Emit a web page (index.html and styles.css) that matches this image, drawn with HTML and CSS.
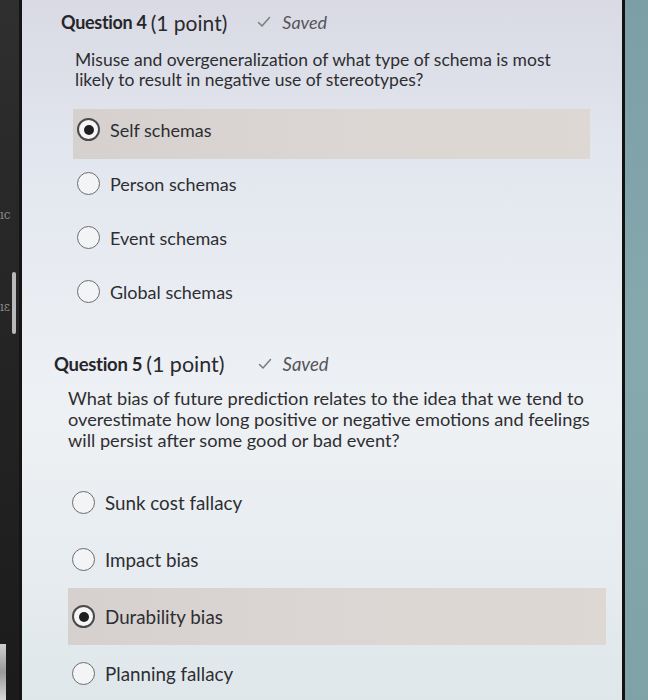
FILE: index.html
```html
<!DOCTYPE html>
<html lang="en">
<head>
<meta charset="utf-8">
<title>Quiz</title>
<link rel="stylesheet" href="styles.css">
</head>
<body>
<div class="screen">
  <aside class="bezel-left">
    <div class="edge-col">
      <span class="edge-txt t1">ıc</span>
      <span class="edge-txt t2">ıɛ</span>
      <span class="edge-patch"></span>
    </div>
    <div class="scroll-col"><span class="thumb"></span></div>
  </aside>
  <main class="page">
    <section class="q q4">
      <div class="qhead">
        <span class="qlabel">Question 4</span>
        <span class="pts">(1 point)</span>
        <span class="saved"><svg class="check" viewBox="0 0 14 12" width="14" height="12"><path d="M1.5 6.5 L5 10 L12.5 1.5" fill="none" stroke="#7b7b80" stroke-width="1.5" stroke-linecap="round" stroke-linejoin="round"/></svg>Saved</span>
      </div>
      <p class="qtext qtext4">Misuse and overgeneralization of what type of schema is most likely to result in negative use of stereotypes?</p>
      <div class="opts">
        <div class="opt opt4 sel"><span class="radio on"></span><span class="label">Self schemas</span></div>
        <div class="opt opt4"><span class="radio"></span><span class="label">Person schemas</span></div>
        <div class="opt opt4"><span class="radio"></span><span class="label">Event schemas</span></div>
        <div class="opt opt4"><span class="radio"></span><span class="label">Global schemas</span></div>
      </div>
    </section>
    <section class="q q5">
      <div class="qhead">
        <span class="qlabel">Question 5</span>
        <span class="pts">(1 point)</span>
        <span class="saved"><svg class="check" viewBox="0 0 14 12" width="14" height="12"><path d="M1.5 6.5 L5 10 L12.5 1.5" fill="none" stroke="#7b7b80" stroke-width="1.5" stroke-linecap="round" stroke-linejoin="round"/></svg>Saved</span>
      </div>
      <p class="qtext qtext5">What bias of future prediction relates to the idea that we tend to overestimate how long positive or negative emotions and feelings will persist after some good or bad event?</p>
      <div class="opts opts5">
        <div class="opt opt5"><span class="radio"></span><span class="label">Sunk cost fallacy</span></div>
        <div class="opt opt5"><span class="radio"></span><span class="label">Impact bias</span></div>
        <div class="opt opt5 sel"><span class="radio on"></span><span class="label">Durability bias</span></div>
        <div class="opt opt5"><span class="radio"></span><span class="label">Planning fallacy</span></div>
      </div>
    </section>
  </main>
  <div class="bezel-right"></div>
</div>
</body>
</html>
```

FILE: styles.css
```css
html, body {
  margin: 0;
  padding: 0;
  background: #1e1e1e;
}

.screen {
  display: flex;
  width: 648px;
  height: 700px;
  overflow: hidden;
}

.bezel-left {
  width: 22px;
  flex: none;
  display: flex;
  background: linear-gradient(180deg, #2f2f2f 0%, #262626 40%, #1b1b1b 100%);
  border-right: 3px solid #151515;
  box-sizing: border-box;
}

.edge-col {
  width: 12px;
  display: flex;
  flex-direction: column;
  overflow: hidden;
}

.edge-txt {
  font-family: "DejaVu Serif", serif;
  font-size: 12px;
  line-height: 14px;
  color: #8a8a8a;
  white-space: nowrap;
}

.t1 { margin-top: 208px; }
.t2 { margin-top: 78px; }

.edge-patch {
  margin-top: 330px;
  width: 6px;
  height: 56px;
  background: linear-gradient(180deg, #cfcfcf, #9a9a9a 50%, #d8d8d8);
}

.scroll-col {
  width: 5px;
}

.thumb {
  display: block;
  margin-top: 272px;
  width: 4px;
  height: 62px;
  border-radius: 2px;
  background: #b9b9bb;
}

.page {
  flex: 1;
  background: linear-gradient(180deg, #d9dae4 0%, #e2e6ee 22%, #eaeef3 45%, #eef1f4 60%, #e5ebef 85%, #dfe7eb 100%);
  font-family: Lato, "Open Sans", sans-serif;
  color: #2f2f33;
  overflow: hidden;
}

.q4 { margin-left: 51px; }
.q5 { margin-left: 46px; }

.qhead {
  display: flex;
  align-items: center;
  height: 24px;
  white-space: nowrap;
}

.q4 .qhead { margin-top: 10px; margin-left: -12px; }
.q5 .qhead { margin-top: 31px; margin-left: -14px; }

.qlabel {
  font-size: 18px;
  font-weight: 700;
  letter-spacing: -0.3px;
  color: #26262a;
}

.pts {
  font-size: 21px;
  margin-left: 4px;
  color: #2a2a2e;
}

.saved {
  display: flex;
  align-items: center;
  gap: 11px;
  margin-left: 30px;
  font-size: 18px;
  font-style: italic;
  color: #55555b;
}

.q5 .qlabel { font-size: 18.5px; }
.q5 .pts { font-size: 21.5px; }
.q5 .saved { margin-left: 33px; font-size: 18.5px; }

.check { display: block; }

.qtext {
  margin: 0;
  color: #2e2e32;
}

.qtext4 {
  margin-top: 16px;
  margin-left: 2px;
  font-size: 17.5px;
  line-height: 20px;
  width: 495px;
}

.qtext5 {
  margin-top: 12px;
  font-size: 18.2px;
  line-height: 21px;
  width: 535px;
}

.opts { margin-top: 19px; }
.opts5 { margin-top: 23px; }

.opt {
  display: flex;
  align-items: center;
  gap: 10px;
  box-sizing: border-box;
  padding-left: 4px;
  color: #2e2e32;
}

.opt4 {
  width: 517px;
  height: 50px;
  margin-bottom: 4px;
  padding-bottom: 9px;
  font-size: 18px;
}

.opt4:last-child { margin-bottom: 0; }

.opt5 {
  width: 538px;
  height: 57px;
  font-size: 18.8px;
}

.sel {
  background: linear-gradient(90deg, #d6d1cf 0%, #dbd6d3 50%, #ddd8d3 100%);
}

.radio {
  flex: none;
  width: 23px;
  height: 23px;
  box-sizing: border-box;
  border: 1.5px solid #6c6c70;
  border-radius: 50%;
  background: #f3f4f6;
  display: flex;
  align-items: center;
  justify-content: center;
}

.radio.on {
  border: 2px solid #4a4a4e;
  background: #f6f6f6;
}

.radio.on::after {
  content: "";
  width: 10px;
  height: 10px;
  border-radius: 50%;
  background: #1f1f22;
}

.bezel-right {
  width: 26px;
  flex: none;
  box-sizing: border-box;
  border-left: 3px solid #121212;
  background: linear-gradient(180deg, #7c9ea5 0%, #86a9ae 50%, #7fa2a6 100%);
}
```
